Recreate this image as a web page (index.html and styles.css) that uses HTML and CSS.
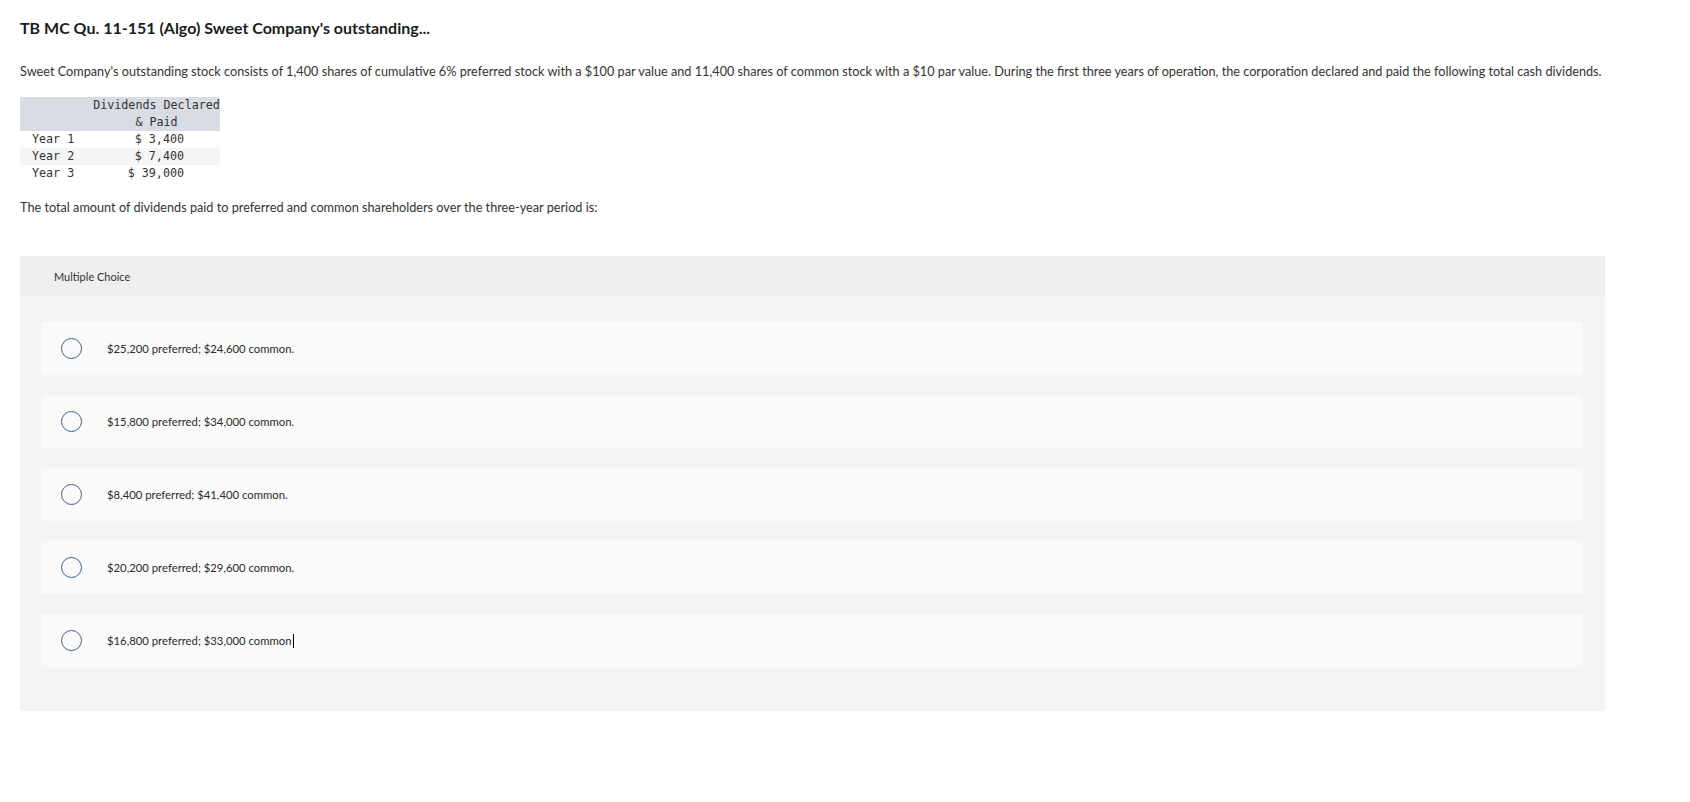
FILE: index.html
```html
<!DOCTYPE html>
<html lang="en">
<head>
<meta charset="utf-8">
<title>TB MC Qu. 11-151 (Algo)</title>
<link rel="stylesheet" href="styles.css">
</head>
<body>
<div class="page">
  <h1 class="title">TB MC Qu. 11-151 (Algo) Sweet Company's outstanding...</h1>
  <p class="stem">Sweet Company's outstanding stock consists of 1,400 shares of cumulative 6% preferred stock with a $100 par value and 11,400 shares of common stock with a $10 par value. During the first three years of operation, the corporation declared and paid the following total cash dividends.</p>
  <table class="divs">
    <thead>
      <tr><th class="c1"></th><th class="c2">Dividends Declared<br>&amp; Paid</th></tr>
    </thead>
    <tbody>
      <tr><td class="c1">Year 1</td><td class="c2 val">$ 3,400</td></tr>
      <tr class="alt"><td class="c1">Year 2</td><td class="c2 val">$ 7,400</td></tr>
      <tr><td class="c1">Year 3</td><td class="c2 val">$ 39,000</td></tr>
    </tbody>
  </table>
  <p class="stem ask">The total amount of dividends paid to preferred and common shareholders over the three-year period is:</p>

  <div class="mc">
    <div class="mc-head">Multiple Choice</div>
    <div class="mc-list">
      <div class="opt"><span class="radio"></span><span class="opt-text">$25,200 preferred; $24,600 common.</span></div>
      <div class="opt"><span class="radio"></span><span class="opt-text">$15,800 preferred; $34,000 common.</span></div>
      <div class="opt"><span class="radio"></span><span class="opt-text">$8,400 preferred; $41,400 common.</span></div>
      <div class="opt"><span class="radio"></span><span class="opt-text">$20,200 preferred; $29,600 common.</span></div>
      <div class="opt"><span class="radio"></span><span class="opt-text">$16,800 preferred; $33,000 common<span class="caret"></span></span></div>
    </div>
  </div>
</div>
</body>
</html>
```

FILE: styles.css
```css
html, body {
  margin: 0;
  padding: 0;
  background: #ffffff;
}

.page {
  width: 1585px;
  padding: 18px 20px 40px 20px;
  font-family: Lato, "Open Sans", sans-serif;
  color: #333333;
}

.title {
  margin: 0;
  font-size: 16px;
  line-height: 20px;
  font-weight: 700;
  color: #1c1c1c;
}

.stem {
  margin: 24px 0 0 0;
  font-size: 12.7px;
  line-height: 18px;
  white-space: nowrap;
}

.divs {
  margin-top: 17px;
  border-collapse: collapse;
  font-family: "DejaVu Sans Mono", "Liberation Mono", monospace;
  font-size: 11.7px;
  line-height: 17px;
  color: #333333;
}

.divs th {
  font-weight: 400;
  background: #d9dce3;
  padding: 0;
}

.divs td {
  padding: 0;
}

.divs .c1 {
  width: 61px;
  padding-left: 12px;
  text-align: left;
}

.divs .c2 {
  width: 127px;
  text-align: center;
}

.divs .val {
  text-align: right;
  padding-right: 36px;
  width: 91px;
}

.divs .alt td {
  background: #f5f5f5;
}

.ask {
  margin-top: 16px;
}

.mc {
  margin-top: 40px;
  background: #f4f4f4;
  border-radius: 2px;
}

.mc-head {
  height: 40px;
  display: flex;
  align-items: center;
  padding-left: 34px;
  background: #efefef;
  font-size: 11px;
  color: #333333;
}

.mc-list {
  display: flex;
  flex-direction: column;
  gap: 20px;
  padding: 26px 22px 44px 21px;
}

.opt {
  height: 53px;
  display: flex;
  align-items: center;
  padding-left: 20px;
  background: #fafafa;
  border-radius: 3px;
}

.radio {
  width: 19px;
  height: 19px;
  border: 1.6px solid #3e5f8e;
  border-radius: 50%;
  flex: none;
}

.opt-text {
  margin-left: 25px;
  font-size: 11.3px;
  color: #2b2b2b;
  display: flex;
  align-items: center;
}

.caret {
  display: inline-block;
  width: 1px;
  height: 14px;
  background: #000000;
  margin-left: 1px;
}
```
